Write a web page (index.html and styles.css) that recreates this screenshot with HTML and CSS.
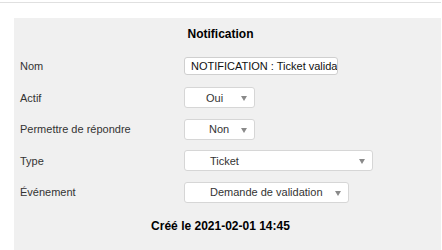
FILE: index.html
```html
<!DOCTYPE html>
<html lang="fr">
<head>
<meta charset="utf-8">
<title>Notification</title>
<link rel="stylesheet" href="styles.css">
</head>
<body>
<div class="topline"></div>
<div class="panel">
  <div class="title">Notification</div>
  <div class="form">
    <div class="label">Nom</div>
    <div class="field"><input class="input" type="text" value="NOTIFICATION : Ticket validation" readonly></div>
    <div class="label">Actif</div>
    <div class="field"><div class="select w-actif"><span class="val pad-oui">Oui</span><span class="arrow"></span></div></div>
    <div class="label">Permettre de répondre</div>
    <div class="field"><div class="select w-actif"><span class="val pad-non">Non</span><span class="arrow"></span></div></div>
    <div class="label">Type</div>
    <div class="field"><div class="select w-type"><span class="val pad-std">Ticket</span><span class="arrow"></span></div></div>
    <div class="label">Événement</div>
    <div class="field"><div class="select w-event"><span class="val pad-std">Demande de validation</span><span class="arrow"></span></div></div>
  </div>
  <div class="created">Créé le 2021-02-01 14:45</div>
</div>
</body>
</html>
```
FILE: styles.css
```css
html, body {
  margin: 0;
  padding: 0;
  background: #fff;
  font-family: "Liberation Sans", Arial, sans-serif;
  color: #222;
}
.topline {
  height: 2px;
  width: 441px;
  border-bottom: 1px solid #e0e0e0;
}
.panel {
  margin: 15px 1px 0 14px;
  background: #f0f0f0;
  padding: 9px 20px 30px 6px;
  height: 193px;
}
.title {
  text-align: center;
  font-weight: bold;
  font-size: 12px;
  line-height: 14px;
  color: #000;
}
.form {
  margin-top: 14.5px;
  display: grid;
  grid-template-columns: 164px 1fr;
  grid-auto-rows: 21px;
  row-gap: 10.5px;
  font-size: 11px;
}
.label {
  display: flex;
  align-items: center;
  color: #333;
}
.field {
  display: flex;
  align-items: center;
}
.input {
  box-sizing: border-box;
  width: 154px;
  height: 18px;
  margin: 0;
  background: #fff;
  border: 1px solid #cfcfcf;
  border-radius: 3px;
  padding: 0 0 0 6px;
  font-family: "Liberation Sans", Arial, sans-serif;
  font-size: 11px;
  line-height: 16px;
  color: #111;
  outline: none;
}
.select {
  box-sizing: border-box;
  height: 21px;
  background: #fff;
  border: 1px solid #d6d6d6;
  border-radius: 3px;
  display: flex;
  align-items: center;
  position: relative;
  color: #333;
}
.w-actif { width: 71px; }
.w-type { width: 189px; }
.w-event { width: 165px; }
.val { white-space: nowrap; }
.pad-oui { padding-left: 21px; }
.pad-non { padding-left: 24px; }
.pad-std { padding-left: 25px; }
.arrow {
  position: absolute;
  right: 7px;
  top: 8px;
  width: 0;
  height: 0;
  border-left: 3.5px solid transparent;
  border-right: 3.5px solid transparent;
  border-top: 5px solid #8a8a8a;
}
.created {
  margin-top: 16.5px;
  text-align: center;
  font-weight: bold;
  font-size: 12px;
  line-height: 14px;
  color: #000;
}
```
